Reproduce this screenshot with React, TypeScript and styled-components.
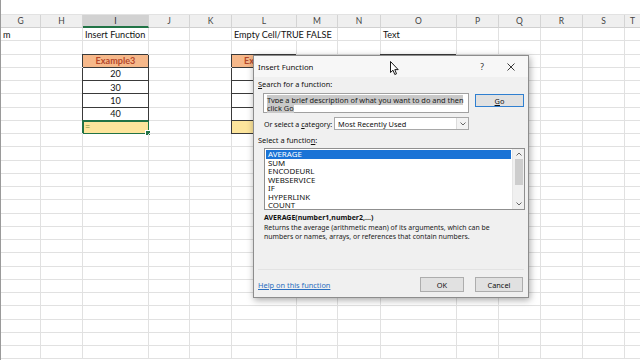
import React from "react";
import styled, { createGlobalStyle } from "styled-components";

const GlobalStyle = createGlobalStyle`
  html, body {
    margin: 0;
    padding: 0;
    background: #ffffff;
    overflow: hidden;
  }
  body {
    font-family: "Lato", "Liberation Sans", sans-serif;
  }
`;

const COLS = [40, 42, 66, 41, 42, 65, 41, 43, 76, 42, 42, 42, 42, 16];
const LETTERS = ["G", "H", "I", "J", "K", "L", "M", "N", "O", "P", "Q", "R", "S", "T"];
const ROW_COUNT = 25;
const template = COLS.map((c) => `${c}px`).join(" ");

type Kind = "plain" | "th" | "td" | "sel" | "yellow";

interface CellDef {
  text?: string;
  kind?: Kind;
  align?: "left" | "center" | "right";
  spill?: boolean;
}

const cells: Record<string, CellDef> = {
  "1-G": { text: "m", align: "left" },
  "1-I": { text: "Insert Function", align: "left" },
  "1-L": { text: "Empty Cell/TRUE FALSE", align: "left", spill: true },
  "1-O": { text: "Text", align: "left" },
  "3-I": { text: "Example3", kind: "th" },
  "3-L": { text: "Example4", kind: "th" },
  "3-O": { kind: "th" },
  "4-I": { text: "20", kind: "td" },
  "5-I": { text: "30", kind: "td" },
  "6-I": { text: "10", kind: "td" },
  "7-I": { text: "40", kind: "td" },
  "4-L": { kind: "td" },
  "5-L": { kind: "td" },
  "6-L": { kind: "td" },
  "7-L": { kind: "td" },
  "4-O": { kind: "td" },
  "5-O": { kind: "td" },
  "6-O": { kind: "td" },
  "7-O": { kind: "td" },
  "8-I": { text: "=", kind: "sel", align: "left" },
  "8-L": { kind: "yellow" },
};

const Sheet = styled.div`
  position: relative;
  width: 640px;
  height: 360px;
  overflow: hidden;
  background: #ffffff;
  border-left: 1px solid #9a9a9a;
  box-sizing: border-box;
`;

const TopStrip = styled.div`
  height: 14px;
  background: #ffffff;
  border-bottom: 1px solid #e2e2e2;
`;

const HeaderRow = styled.div`
  display: grid;
  grid-template-columns: ${template};
  height: 13px;
  background: #efefef;
`;

const HeaderCell = styled.div<{ $active?: boolean }>`
  display: flex;
  align-items: center;
  justify-content: center;
  font-size: 8.5px;
  color: ${({ $active }) => ($active ? "#2a2a2a" : "#444444")};
  background: ${({ $active }) => ($active ? "#d2d2d2" : "#efefef")};
  border-right: 1px solid #d4d4d4;
  border-bottom: ${({ $active }) => ($active ? "2px solid #217346" : "1px solid #d0d0d0")};
  box-sizing: border-box;
`;

const Row = styled.div`
  display: grid;
  grid-template-columns: ${template};
  height: 13.25px;
`;

const Cell = styled.div<{ $kind: Kind; $align: string; $spill?: boolean }>`
  position: relative;
  display: flex;
  align-items: center;
  justify-content: ${({ $align }) =>
    $align === "left" ? "flex-start" : $align === "right" ? "flex-end" : "center"};
  padding: 0 2px;
  box-sizing: border-box;
  white-space: nowrap;
  font-size: 9.1px;
  color: #111111;
  border-right: 1px solid ${({ $spill }) => ($spill ? "transparent" : "#e1e1e1")};
  border-bottom: 1px solid #e1e1e1;
  ${({ $kind }) =>
    $kind === "th" &&
    `
    background: #f6b88a;
    color: #b4472a;
    font-weight: 700;
    border-right-color: #3a3a3a;
    border-bottom-color: #3a3a3a;
    box-shadow: -1px -1px 0 0 #3a3a3a;
  `}
  ${({ $kind }) =>
    $kind === "td" &&
    `
    border-right-color: #3a3a3a;
    border-bottom-color: #3a3a3a;
    box-shadow: -1px 0 0 0 #3a3a3a;
  `}
  ${({ $kind }) =>
    $kind === "yellow" &&
    `
    background: #fde59c;
    border-right-color: #3a3a3a;
    border-bottom-color: #3a3a3a;
    box-shadow: -1px 0 0 0 #3a3a3a;
  `}
  ${({ $kind }) =>
    $kind === "sel" &&
    `
    background: #fde59c;
    color: #6b8f3a;
    border-right-color: #217346;
    border-bottom-color: #217346;
    box-shadow: -1px -1px 0 0 #217346, inset 1px 1px 0 0 #217346;
  `}
`;

const FillHandle = styled.span`
  position: absolute;
  right: -3px;
  bottom: -3px;
  width: 4px;
  height: 4px;
  background: #217346;
  border: 1px solid #ffffff;
`;

/* ---------- dialog ---------- */

const Dialog = styled.div`
  position: absolute;
  left: 252px;
  top: 55px;
  width: 276px;
  height: 243px;
  box-sizing: border-box;
  display: flex;
  flex-direction: column;
  background: #f0f0f0;
  border: 1px solid #8d8d8d;
  box-shadow: 1px 2px 7px rgba(0, 0, 0, 0.35);
  font-family: "Segoe UI", "Noto Sans", "Open Sans", sans-serif;
  font-size: 7.4px;
  color: #111111;
`;

const TitleBar = styled.div`
  display: flex;
  align-items: center;
  height: 21px;
  padding-left: 4px;
  background: #f7f7f7;
  flex-shrink: 0;
`;

const Title = styled.span`
  flex: 1;
  font-size: 7.8px;
`;

const Help = styled.span`
  width: 28px;
  text-align: center;
  font-size: 8.5px;
  color: #333;
`;

const CloseBox = styled.span`
  width: 30px;
  display: flex;
  justify-content: center;
  margin-right: 2px;
`;

const Body = styled.div`
  flex: 1;
  display: flex;
  flex-direction: column;
  padding: 0 4px 4px 4px;
`;

const Label = styled.div<{ $top?: number }>`
  margin-top: ${({ $top }) => $top ?? 0}px;
  line-height: 9px;
  u {
    text-decoration: underline;
    text-underline-offset: 1px;
  }
`;

const SearchRow = styled.div`
  display: flex;
  align-items: flex-start;
  margin-top: 4px;
  margin-left: 5px;
`;

const SearchBox = styled.div`
  width: 207px;
  height: 20px;
  box-sizing: border-box;
  background: #ffffff;
  border: 1px solid #a0a0a0;
  padding: 1.5px 3px;
  line-height: 8.5px;
`;

const Selected = styled.span`
  background: #c9c9c9;
  color: #1a1a1a;
`;

const Button = styled.div<{ $w: number; $h: number; $primary?: boolean }>`
  width: ${({ $w }) => $w}px;
  height: ${({ $h }) => $h}px;
  box-sizing: border-box;
  display: flex;
  align-items: center;
  justify-content: center;
  background: #e1e1e1;
  border: ${({ $primary }) => ($primary ? "1.5px solid #2f7fd0" : "1px solid #adadad")};
  color: #111;
  u {
    text-decoration: underline;
    text-underline-offset: 1px;
  }
`;

const GoWrap = styled.div`
  margin-left: 6px;
  margin-top: 1px;
`;

const CategoryRow = styled.div`
  display: flex;
  align-items: center;
  justify-content: space-between;
  width: 205px;
  margin-top: 4px;
  margin-left: 6px;
`;

const CategoryLabel = styled.span`
  white-space: nowrap;
  font-size: 7.1px;
`;

const SelectBox = styled.div`
  width: 135px;
  height: 13px;
  box-sizing: border-box;
  display: flex;
  align-items: center;
  background: #ffffff;
  border: 1px solid #a8a8a8;
  padding-left: 3px;
`;

const SelectText = styled.span`
  flex: 1;
`;

const Chevron = styled.span`
  width: 11px;
  height: 11px;
  display: flex;
  align-items: center;
  justify-content: center;
  border-left: 1px solid #dcdcdc;
  background: #f3f3f3;
`;

const ListBox = styled.div`
  display: flex;
  margin-top: 3px;
  margin-left: 6px;
  width: 261px;
  height: 62px;
  box-sizing: border-box;
  background: #ffffff;
  border: 1px solid #8f8f8f;
`;

const ListItems = styled.div`
  flex: 1;
  padding: 1px 1px 0 1px;
`;

const ListItem = styled.div<{ $selected?: boolean }>`
  height: 8.5px;
  line-height: 8.5px;
  padding-left: 2px;
  font-size: 7.9px;
  background: ${({ $selected }) => ($selected ? "#1a73d6" : "transparent")};
  color: ${({ $selected }) => ($selected ? "#ffffff" : "#111111")};
`;

const ScrollBar = styled.div`
  width: 11px;
  display: flex;
  flex-direction: column;
  align-items: center;
  background: #f0f0f0;
  border-left: 1px solid #e6e6e6;
`;

const ScrollArrow = styled.div`
  height: 10px;
  display: flex;
  align-items: center;
  justify-content: center;
`;

const ScrollThumb = styled.div`
  width: 8px;
  height: 26px;
  background: #cdcdcd;
`;

const ScrollGap = styled.div`
  flex: 1;
`;

const Signature = styled.div`
  margin-top: 3px;
  margin-left: 6px;
  font-weight: 700;
  font-size: 7px;
  line-height: 9px;
`;

const Description = styled.div`
  margin-top: 2px;
  margin-left: 6px;
  font-size: 6.9px;
  line-height: 8.5px;
  color: #222;
`;

const Footer = styled.div`
  margin-top: auto;
  display: flex;
  align-items: center;
  border-top: 1px solid #e3e3e3;
  padding-top: 7px;
  padding-bottom: 1px;
`;

const HelpLink = styled.span`
  flex: 1;
  color: #2a6fc0;
  text-decoration: underline;
  text-underline-offset: 1px;
`;

const FooterButtons = styled.div`
  display: flex;
  gap: 11px;
  margin-right: 1px;
`;

const Cursor = styled.svg`
  position: absolute;
  left: 389px;
  top: 61px;
`;

const functions = ["AVERAGE", "SUM", "ENCODEURL", "WEBSERVICE", "IF", "HYPERLINK", "COUNT"];

const CloseIcon = () => (
  <svg width="8" height="8" viewBox="0 0 8 8">
    <path d="M0.5 0.5 L7.5 7.5 M7.5 0.5 L0.5 7.5" stroke="#222" strokeWidth="0.9" />
  </svg>
);

const SmallChevron = ({ up }: { up?: boolean }) => (
  <svg width="6" height="4" viewBox="0 0 6 4">
    <path
      d={up ? "M0.5 3.5 L3 1 L5.5 3.5" : "M0.5 0.5 L3 3 L5.5 0.5"}
      fill="none"
      stroke="#555"
      strokeWidth="0.9"
    />
  </svg>
);

const InsertFunctionDialog = () => (
  <Dialog>
    <TitleBar>
      <Title>Insert Function</Title>
      <Help>?</Help>
      <CloseBox>
        <CloseIcon />
      </CloseBox>
    </TitleBar>
    <Body>
      <Label $top={3}>
        <u>S</u>earch for a function:
      </Label>
      <SearchRow>
        <SearchBox>
          <Selected>
            Type a brief description of what you want to do and then
            <br />
            click Go
          </Selected>
        </SearchBox>
        <GoWrap>
          <Button $w={49} $h={13} $primary>
            <u>G</u>o
          </Button>
        </GoWrap>
      </SearchRow>
      <CategoryRow>
        <CategoryLabel>
          Or select a <u>c</u>ategory:
        </CategoryLabel>
        <SelectBox>
          <SelectText>Most Recently Used</SelectText>
          <Chevron>
            <SmallChevron />
          </Chevron>
        </SelectBox>
      </CategoryRow>
      <Label $top={6}>
        Select a functio<u>n</u>:
      </Label>
      <ListBox>
        <ListItems>
          {functions.map((f, i) => (
            <ListItem key={f} $selected={i === 0}>
              {f}
            </ListItem>
          ))}
        </ListItems>
        <ScrollBar>
          <ScrollArrow>
            <SmallChevron up />
          </ScrollArrow>
          <ScrollThumb />
          <ScrollGap />
          <ScrollArrow>
            <SmallChevron />
          </ScrollArrow>
        </ScrollBar>
      </ListBox>
      <Signature>AVERAGE(number1,number2,...)</Signature>
      <Description>
        Returns the average (arithmetic mean) of its arguments, which can be
        <br />
        numbers or names, arrays, or references that contain numbers.
      </Description>
      <Footer>
        <HelpLink>Help on this function</HelpLink>
        <FooterButtons>
          <Button $w={44} $h={15}>
            OK
          </Button>
          <Button $w={48} $h={15}>
            Cancel
          </Button>
        </FooterButtons>
      </Footer>
    </Body>
  </Dialog>
);

export default function App() {
  const rows = Array.from({ length: ROW_COUNT }, (_, i) => i + 1);
  return (
    <>
      <GlobalStyle />
      <Sheet>
        <TopStrip />
        <HeaderRow>
          {LETTERS.map((l) => (
            <HeaderCell key={l} $active={l === "I"}>
              {l}
            </HeaderCell>
          ))}
        </HeaderRow>
        {rows.map((r) => (
          <Row key={r}>
            {LETTERS.map((l) => {
              const def = cells[`${r}-${l}`] ?? {};
              const kind = def.kind ?? "plain";
              return (
                <Cell key={l} $kind={kind} $align={def.align ?? "center"} $spill={def.spill}>
                  {def.text}
                  {kind === "sel" && <FillHandle />}
                </Cell>
              );
            })}
          </Row>
        ))}
        <InsertFunctionDialog />
        <Cursor width="10" height="15" viewBox="0 0 10 15">
          <path
            d="M0.5 0.5 L0.5 11.5 L3 9.2 L4.8 13.5 L6.5 12.8 L4.8 8.6 L8.2 8.6 Z"
            fill="#ffffff"
            stroke="#000000"
            strokeWidth="0.9"
            strokeLinejoin="round"
          />
        </Cursor>
      </Sheet>
    </>
  );
}
